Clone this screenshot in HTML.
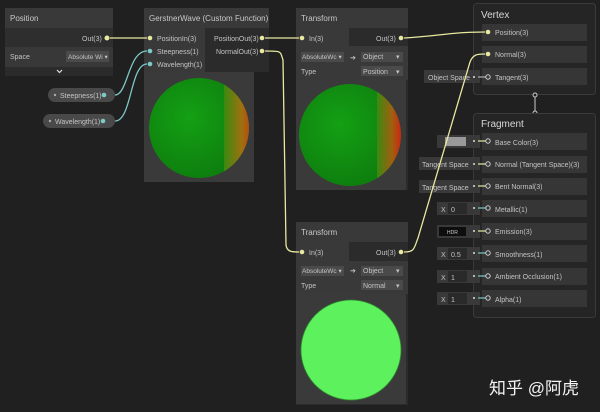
<!DOCTYPE html><html><head><meta charset="utf-8"><style>
body{margin:0;background:#202020;width:600px;height:412px;overflow:hidden}
svg{display:block;font-family:"Liberation Sans","Noto Sans CJK SC",sans-serif}
.t{fill:#c4c4c4;font-size:7px}
.h{fill:#c8c8c8;font-size:8px}
</style></head><body>
<svg width="600" height="412" viewBox="0 0 600 412">
<defs>
<radialGradient id="g1" cx="0.4" cy="0.4" r="0.7"><stop offset="0" stop-color="#14a014"/><stop offset="1" stop-color="#0d7a0d"/></radialGradient>
<linearGradient id="r1" x1="0" x2="1"><stop offset="0" stop-color="#3a8a10"/><stop offset="0.6" stop-color="#a07010"/><stop offset="1" stop-color="#c83010"/></linearGradient>
<linearGradient id="r2" x1="0" x2="1"><stop offset="0" stop-color="#3a8a10"/><stop offset="0.6" stop-color="#a06010"/><stop offset="1" stop-color="#d02010"/></linearGradient>
<clipPath id="c1"><circle cx="199" cy="128" r="50"/></clipPath>
<clipPath id="c2"><circle cx="350" cy="135" r="51"/></clipPath>
</defs>

<rect x="5" y="8" width="108" height="68" fill="#2b2b2b"/>
<rect x="5" y="8" width="108" height="20" fill="#393939"/>
<text class="h" x="10" y="21">Position</text>
<rect x="5" y="28" width="108" height="19" fill="#2e2e2e"/>
<text class="t" x="82" y="41">Out(3)</text>
<circle cx="107" cy="38" r="2.5" fill="#e8e8a0"/>
<rect x="5" y="47" width="108" height="20" fill="#383838"/>
<text class="t" x="10" y="59">Space</text>
<rect x="66" y="51" width="43" height="11" fill="#4a4a4a"/>
<text class="t" x="68" y="59" style="font-size:6.5px">Absolute Wi ▾</text>
<path d="M57 70l2.5 2.5 2.5-2.5" stroke="#ddd" fill="none" stroke-width="1.2"/>

<rect x="48" y="88" width="67" height="14" rx="7" fill="#494949"/>
<circle cx="55" cy="95" r="1.2" fill="#aaa"/>
<text class="t" x="60" y="98">Steepness(1)</text>
<circle cx="104" cy="95" r="2.3" fill="#7ec8c8"/>
<rect x="43" y="114" width="72" height="14" rx="7" fill="#494949"/>
<circle cx="50" cy="121" r="1.2" fill="#aaa"/>
<text class="t" x="55" y="124">Wavelength(1)</text>
<circle cx="103" cy="121" r="2.3" fill="#7ec8c8"/>

<rect x="144" y="8" width="125" height="64" fill="#2b2b2b"/>
<rect x="144" y="8" width="125" height="20" fill="#393939"/>
<text class="h" x="149" y="21">GerstnerWave (Custom Function)</text>
<rect x="144" y="28" width="61" height="44" fill="#393939"/>
<circle cx="150" cy="38" r="2.3" fill="#e8e8a0"/><text class="t" x="157" y="41">PositionIn(3)</text>
<circle cx="150" cy="51" r="2.3" fill="#7ec8c8"/><text class="t" x="157" y="54">Steepness(1)</text>
<circle cx="150" cy="64" r="2.3" fill="#7ec8c8"/><text class="t" x="157" y="67">Wavelength(1)</text>
<text class="t" x="214" y="41">PositionOut(3)</text><circle cx="262" cy="38" r="2.3" fill="#e8e8a0"/>
<text class="t" x="216" y="54">NormalOut(3)</text><circle cx="262" cy="51" r="2.3" fill="#e8e8a0"/>
<rect x="144" y="72" width="110" height="110" fill="#3a3a3a"/>
<circle cx="199" cy="128" r="50" fill="url(#g1)"/>
<rect x="224" y="70" width="30" height="110" fill="url(#r1)" clip-path="url(#c1)"/>

<rect x="296" y="8" width="112" height="182" fill="#2b2b2b"/>
<rect x="296" y="8" width="112" height="20" fill="#393939"/>
<text class="h" x="301" y="21">Transform</text>
<rect x="296" y="28" width="53" height="18" fill="#393939"/>
<circle cx="302" cy="38" r="2.3" fill="#e8e8a0"/><text class="t" x="309" y="41">In(3)</text>
<text class="t" x="376" y="41">Out(3)</text><circle cx="401" cy="38" r="2.3" fill="#e8e8a0"/>
<rect x="296" y="46" width="112" height="34" fill="#393939"/>
<rect x="301" y="52" width="43" height="10" fill="#4a4a4a"/><text class="t" x="302" y="59" style="font-size:6.5px">AbsoluteWc ▾</text>
<text class="t" x="350" y="60">➔</text>
<rect x="361" y="52" width="42" height="10" fill="#4a4a4a"/><text class="t" x="363" y="59">Object</text><text class="t" x="396" y="59">▾</text>
<text class="t" x="301" y="74">Type</text>
<rect x="361" y="66" width="42" height="10" fill="#4a4a4a"/><text class="t" x="363" y="74">Position</text><text class="t" x="396" y="74">▾</text>
<rect x="296" y="80" width="110" height="110" fill="#3a3a3a"/>
<circle cx="350" cy="135" r="51" fill="url(#g1)"/>
<rect x="377" y="80" width="25" height="110" fill="url(#r2)" clip-path="url(#c2)"/>

<rect x="296" y="222" width="112" height="183" fill="#2b2b2b"/>
<rect x="296" y="222" width="112" height="20" fill="#393939"/>
<text class="h" x="301" y="235">Transform</text>
<rect x="296" y="242" width="53" height="19" fill="#393939"/>
<circle cx="302" cy="252" r="2.3" fill="#e8e8a0"/><text class="t" x="309" y="255">In(3)</text>
<text class="t" x="376" y="255">Out(3)</text><circle cx="401" cy="252" r="2.3" fill="#e8e8a0"/>
<rect x="296" y="261" width="112" height="33" fill="#393939"/>
<rect x="301" y="266" width="43" height="10" fill="#4a4a4a"/><text class="t" x="302" y="273" style="font-size:6.5px">AbsoluteWc ▾</text>
<text class="t" x="350" y="273">➔</text>
<rect x="361" y="266" width="42" height="10" fill="#4a4a4a"/><text class="t" x="363" y="273">Object</text><text class="t" x="396" y="273">▾</text>
<text class="t" x="301" y="288">Type</text>
<rect x="361" y="280" width="42" height="10" fill="#4a4a4a"/><text class="t" x="363" y="288">Normal</text><text class="t" x="396" y="288">▾</text>
<rect x="296" y="294" width="110" height="110" fill="#3a3a3a"/>
<circle cx="351" cy="350" r="50" fill="#5ef15e" stroke="#2f8f2f" stroke-width="0.8"/>

<rect x="473.5" y="3.5" width="122" height="91" rx="3" fill="#252525" stroke="#3a3a3a"/>
<text x="481" y="18" style="fill:#d8d8d8;font-size:10px">Vertex</text>
<rect x="482" y="24" width="105" height="17" fill="#363636"/>
<rect x="482" y="46" width="105" height="17" fill="#363636"/>
<rect x="482" y="68" width="105" height="17" fill="#363636"/>
<circle cx="488" cy="32" r="2.3" fill="#e8e8a0"/><text class="t" x="495" y="35">Position(3)</text>
<circle cx="488" cy="54" r="2.3" fill="#e8e8a0"/><text class="t" x="495" y="57">Normal(3)</text>
<circle cx="488" cy="77" r="2.2" fill="none" stroke="#ccc"/><text class="t" x="495" y="80">Tangent(3)</text>
<rect x="424" y="70" width="56" height="13" fill="#393939"/><text class="t" x="428" y="80">Object Space</text>
<circle cx="474" cy="77" r="1" fill="#ddd"/><line x1="478" y1="77" x2="486" y2="77" stroke="#ccc"/>
<path d="M535 95v18" stroke="#ccc"/><circle cx="535" cy="95" r="2" fill="#202020" stroke="#ccc"/><circle cx="535" cy="113" r="2" fill="#202020" stroke="#ccc"/>

<rect x="473.5" y="113.5" width="122" height="204" rx="3" fill="#252525" stroke="#3a3a3a"/>
<text x="481" y="127" style="fill:#d8d8d8;font-size:10px">Fragment</text>
<g fill="#363636">
<rect x="482" y="133" width="105" height="17"/><rect x="482" y="156" width="105" height="17"/>
<rect x="482" y="178" width="105" height="17"/><rect x="482" y="200" width="105" height="17"/>
<rect x="482" y="223" width="105" height="17"/><rect x="482" y="245" width="105" height="17"/>
<rect x="482" y="268" width="105" height="17"/><rect x="482" y="290" width="105" height="17"/>
</g>
<g class="t">
<text x="495" y="145">Base Color(3)</text>
<text x="495" y="167">Normal (Tangent Space)(3)</text>
<text x="495" y="189">Bent Normal(3)</text>
<text x="495" y="212">Metallic(1)</text>
<text x="495" y="234">Emission(3)</text>
<text x="495" y="257">Smoothness(1)</text>
<text x="495" y="279">Ambient Occlusion(1)</text>
<text x="495" y="302">Alpha(1)</text>
</g>
<g fill="#393939">
<rect x="437" y="135" width="43" height="13"/>
<rect x="419" y="157" width="61" height="13"/>
<rect x="419" y="180" width="61" height="13"/>
<rect x="437" y="202" width="43" height="13"/>
<rect x="437" y="225" width="43" height="13"/>
<rect x="437" y="247" width="43" height="13"/>
<rect x="437" y="270" width="43" height="13"/>
<rect x="437" y="292" width="43" height="13"/>
</g>
<rect x="445" y="137" width="21" height="9" fill="#999"/>
<text class="t" x="422" y="167">Tangent Space</text>
<text class="t" x="422" y="190">Tangent Space</text>
<rect x="439" y="227" width="27" height="9" fill="#0e0e0e"/><text x="447" y="234" style="fill:#ccc;font-size:5px">HDR</text>
<g class="t"><text x="441" y="212">X</text><text x="441" y="257">X</text><text x="441" y="280">X</text><text x="441" y="302">X</text></g>
<g fill="#2a2a2a"><rect x="448" y="203" width="19" height="11"/><rect x="448" y="248" width="19" height="11"/><rect x="448" y="271" width="19" height="11"/><rect x="448" y="293" width="19" height="11"/></g>
<g class="t"><text x="451" y="212">0</text><text x="451" y="257">0.5</text><text x="451" y="280">1</text><text x="451" y="302">1</text></g>
<g stroke-width="1.2">
<line x1="478" y1="141" x2="486" y2="141" stroke="#e8e8a0"/><line x1="478" y1="164" x2="486" y2="164" stroke="#e8e8a0"/>
<line x1="478" y1="186" x2="486" y2="186" stroke="#e8e8a0"/><line x1="478" y1="208" x2="486" y2="208" stroke="#7ec8c8"/>
<line x1="478" y1="231" x2="486" y2="231" stroke="#e8e8a0"/><line x1="478" y1="253" x2="486" y2="253" stroke="#7ec8c8"/>
<line x1="478" y1="276" x2="486" y2="276" stroke="#7ec8c8"/><line x1="478" y1="298" x2="486" y2="298" stroke="#7ec8c8"/>
</g>
<g fill="#ddd"><circle cx="474" cy="141" r="1"/><circle cx="474" cy="164" r="1"/><circle cx="474" cy="186" r="1"/><circle cx="474" cy="208" r="1"/><circle cx="474" cy="231" r="1"/><circle cx="474" cy="253" r="1"/><circle cx="474" cy="276" r="1"/><circle cx="474" cy="298" r="1"/></g>
<g fill="#363636" stroke="#ccc"><circle cx="488" cy="141" r="2.2"/><circle cx="488" cy="164" r="2.2"/><circle cx="488" cy="186" r="2.2"/><circle cx="488" cy="208" r="2.2"/><circle cx="488" cy="231" r="2.2"/><circle cx="488" cy="253" r="2.2"/><circle cx="488" cy="276" r="2.2"/><circle cx="488" cy="298" r="2.2"/></g>

<g fill="none" stroke-width="1.3">
<path d="M110 38 H147" stroke="#e8e8a0"/>
<path d="M115 95 C128 95 128 51 147 51" stroke="#7ec8c8"/>
<path d="M115 121 C132 121 130 64 147 64" stroke="#7ec8c8"/>
<path d="M265 38 H299" stroke="#e8e8a0"/>
<path d="M265 51 C282 51 280 51 283 60 L286 245 C287 252 292 252 299 252" stroke="#e8e8a0"/>
<path d="M404 38 C440 36 450 32 485 32" stroke="#e8e8a0"/>
<path d="M404 252 C415 252 414 248 418 238 L470 62 C473 54 478 54 485 54" stroke="#e8e8a0"/>
</g>

<text x="489" y="394" style="fill:#f4f4f4;font-size:17px">知乎 @阿虎</text>
</svg>
</body></html>
